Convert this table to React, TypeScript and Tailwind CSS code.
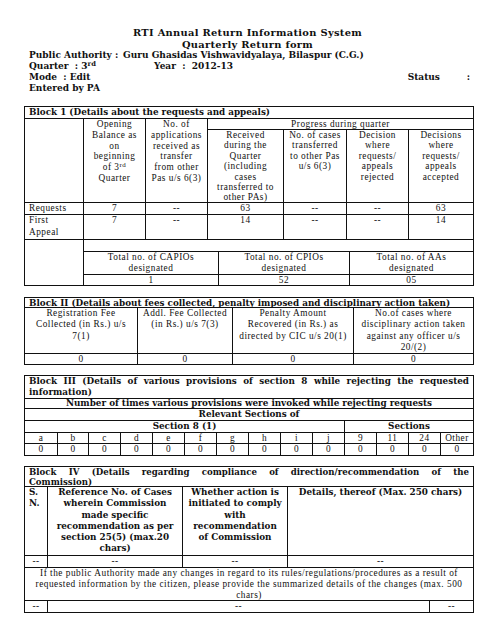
import React from "react";

const B = "border-r border-b border-[#111]";
const R = "font-['Liberation_Serif','Times_New_Roman',serif] font-normal text-[9.3px] tracking-[0.5px]";
const BD = "font-['DejaVu_Serif',serif] font-bold text-[8.8px]";

function Lines({ items }: { items: React.ReactNode[] }) {
  return (
    <>
      {items.map((t, i) => (
        <div key={i} className="whitespace-nowrap">
          {t}
        </div>
      ))}
    </>
  );
}

export default function App() {
  const letters = ["a", "b", "c", "d", "e", "f", "g", "h", "i", "j", "9", "11", "24", "Other"];
  return (
    <div className="w-[495px] h-[640px] overflow-hidden bg-white text-[#111] font-['Liberation_Serif','Times_New_Roman',serif]">
      {/* Title */}
      <div className="pt-[27px] text-center font-['DejaVu_Serif',serif] font-bold text-[9.9px] tracking-[0.3px] leading-[11.5px]">
        <div>RTI Annual Return Information System</div>
        <div>Quarterly Return form</div>
      </div>

      {/* Meta */}
      <div className="pl-[29px] pr-[25px] font-['DejaVu_Serif',serif] font-bold text-[9px] leading-[11px]">
        <div className="flex whitespace-nowrap">
          <span className="w-[94px]">Public Authority :</span>
          <span>Guru Ghasidas Vishwavidyalaya, Bilaspur (C.G.)</span>
        </div>
        <div className="flex whitespace-nowrap">
          <span className="w-[125px]">
            Quarter&nbsp; : 3<sup>rd</sup>
          </span>
          <span>Year&nbsp; :&nbsp; 2012-13</span>
        </div>
        <div className="flex justify-between whitespace-nowrap">
          <span>Mode&nbsp; : Edit</span>
          <span className="flex">
            <span className="w-[59px]">Status</span>
            <span>:</span>
          </span>
        </div>
        <div>Entered by PA</div>
      </div>

      {/* Block 1 */}
      <div className="ml-[24px] mt-[12px] w-[450px]">
        <div className="grid grid-cols-[59px_62px_62px_76px_63px_62px_65px] grid-rows-[12px_11px_73px_12px_25px] border-l border-t border-[#111]">
          <div className={`col-span-7 ${B} ${BD} pl-[4px] leading-[11px] whitespace-nowrap`}>
            Block 1 (Details about the requests and appeals)
          </div>
          <div className={`row-span-2 ${B}`}></div>
          <div className={`row-span-2 ${B} ${R} text-center leading-[10.8px]`}>
            <Lines items={["Opening", "Balance as", "on", "beginning", <>of 3<sup>rd</sup></>, "Quarter"]} />
          </div>
          <div className={`row-span-2 ${B} ${R} text-center leading-[10.8px]`}>
            <Lines items={["No. of", "applications", "received as", "transfer", "from other", "Pas u/s 6(3)"]} />
          </div>
          <div className={`col-span-4 ${B} ${R} text-center leading-[10.5px] whitespace-nowrap`}>
            Progress during quarter
          </div>
          <div className={`${B} ${R} text-center leading-[10.4px]`}>
            <Lines items={["Received", "during the", "Quarter", "(including", "cases", "transferred to", "other PAs)"]} />
          </div>
          <div className={`${B} ${R} text-center leading-[10.4px]`}>
            <Lines items={["No. of cases", "transferred", "to other Pas", "u/s 6(3)"]} />
          </div>
          <div className={`${B} ${R} text-center leading-[10.4px]`}>
            <Lines items={["Decision", "where", "requests/", "appeals", "rejected"]} />
          </div>
          <div className={`${B} ${R} text-center leading-[10.4px]`}>
            <Lines items={["Decisions", "where", "requests/", "appeals", "accepted"]} />
          </div>

          <div className={`${B} ${R} pl-[4px] leading-[11px]`}>Requests</div>
          <div className={`${B} ${R} text-center leading-[11px]`}>7</div>
          <div className={`${B} ${R} text-center leading-[11px]`}>--</div>
          <div className={`${B} ${R} text-center leading-[11px]`}>63</div>
          <div className={`${B} ${R} text-center leading-[11px]`}>--</div>
          <div className={`${B} ${R} text-center leading-[11px]`}>--</div>
          <div className={`${B} ${R} text-center leading-[11px]`}>63</div>

          <div className={`${B} ${R} pl-[4px] leading-[11.5px]`}>
            <div>First</div>
            <div>Appeal</div>
          </div>
          <div className={`${B} ${R} text-center leading-[11.5px]`}>7</div>
          <div className={`${B} ${R} text-center leading-[11.5px]`}>--</div>
          <div className={`${B} ${R} text-center leading-[11.5px]`}>14</div>
          <div className={`${B} ${R} text-center leading-[11.5px]`}>--</div>
          <div className={`${B} ${R} text-center leading-[11.5px]`}>--</div>
          <div className={`${B} ${R} text-center leading-[11.5px]`}>14</div>
        </div>
        <div className="grid grid-cols-[59px_135px_131px_124px] grid-rows-[12px_23px_11px] border-l border-[#111]">
          <div className={`row-span-3 ${B}`}></div>
          <div className={`col-span-3 ${B}`}></div>
          <div className={`${B} ${R} text-center leading-[11px] flex flex-col justify-center`}>
            <div>Total no. of CAPIOs</div>
            <div>designated</div>
          </div>
          <div className={`${B} ${R} text-center leading-[11px] flex flex-col justify-center`}>
            <div>Total no. of CPIOs</div>
            <div>designated</div>
          </div>
          <div className={`${B} ${R} text-center leading-[11px] flex flex-col justify-center`}>
            <div>Total no. of AAs</div>
            <div>designated</div>
          </div>
          <div className={`${B} ${R} text-center leading-[10px]`}>1</div>
          <div className={`${B} ${R} text-center leading-[10px]`}>52</div>
          <div className={`${B} ${R} text-center leading-[10px]`}>05</div>
        </div>
      </div>

      {/* Block II */}
      <div className="ml-[24px] mt-[11px] w-[450px] grid grid-cols-[113px_95px_121px_120px] grid-rows-[10px_46px_11px] border-l border-t border-[#111]">
        <div className={`col-span-4 ${B} ${BD} pl-[4px] leading-[10px] whitespace-nowrap`}>
          Block II (Details about fees collected, penalty imposed and disciplinary action taken)
        </div>
        <div className={`${B} ${R} text-center leading-[11.3px]`}>
          <Lines items={["Registration Fee", "Collected (in Rs.) u/s", "7(1)"]} />
        </div>
        <div className={`${B} ${R} text-center leading-[11.3px]`}>
          <Lines items={["Addl. Fee Collected", "(in Rs.) u/s 7(3)"]} />
        </div>
        <div className={`${B} ${R} text-center leading-[11.3px]`}>
          <Lines items={["Penalty Amount", "Recovered (in Rs.) as", "directed by CIC u/s 20(1)"]} />
        </div>
        <div className={`${B} ${R} text-center leading-[11.3px]`}>
          <Lines items={["No.of cases where", "disciplinary action taken", "against any officer u/s", "20/(2)"]} />
        </div>
        <div className={`${B} ${R} text-center leading-[10px]`}>0</div>
        <div className={`${B} ${R} text-center leading-[10px]`}>0</div>
        <div className={`${B} ${R} text-center leading-[10px]`}>0</div>
        <div className={`${B} ${R} text-center leading-[10px]`}>0</div>
      </div>

      {/* Block III */}
      <div className="ml-[24px] mt-[10px] w-[450px] grid grid-cols-[33px_31px_32px_32px_32px_32px_32px_32px_32px_32px_32px_32px_32px_33px] grid-rows-[23px_10px_12px_12px_11px_12px] border-l border-t border-[#111]">
        <div className={`col-span-14 ${B} ${BD} px-[4px] leading-[11px]`}>
          <div className="whitespace-nowrap text-justify [text-align-last:justify]">
            Block III (Details of various provisions of section 8 while rejecting the requested
          </div>
          <div>information)</div>
        </div>
        <div className={`col-span-14 ${B} ${BD} text-center leading-[9px] whitespace-nowrap`}>
          Number of times various provisions were invoked while rejecting requests
        </div>
        <div className={`col-span-14 ${B} ${BD} text-center leading-[11px]`}>Relevant Sections of</div>
        <div className={`col-span-10 ${B} ${BD} text-center leading-[11px]`}>Section 8 (1)</div>
        <div className={`col-span-4 ${B} ${BD} text-center leading-[11px]`}>Sections</div>
        {letters.map((l) => (
          <div key={"l" + l} className={`${B} ${R} text-center leading-[10px]`}>
            {l}
          </div>
        ))}
        {letters.map((l) => (
          <div key={"z" + l} className={`${B} ${R} text-center leading-[11px]`}>
            0
          </div>
        ))}
      </div>

      {/* Block IV */}
      <div className="ml-[24px] mt-[10px] w-[450px] grid grid-cols-[23px_135px_105px_142px_44px] grid-rows-[20px_69px_12px_33px_12px] border-l border-t border-[#111]">
        <div className={`col-span-5 ${B} font-['DejaVu_Serif',serif] font-bold text-[8.6px] px-[4px] leading-[10px]`}>
          <div className="whitespace-nowrap text-justify [text-align-last:justify]">
            Block IV (Details regarding compliance of direction/recommendation of the
          </div>
          <div>Commission)</div>
        </div>
        <div className={`${B} ${BD} pl-[4px] leading-[11.3px]`}>
          <div>S.</div>
          <div>N.</div>
        </div>
        <div className={`${B} ${BD} text-center leading-[11.3px]`}>
          <Lines
            items={[
              "Reference No. of Cases",
              "wherein Commission",
              "made specific",
              "recommendation as per",
              "section 25(5) (max.20",
              "chars)",
            ]}
          />
        </div>
        <div className={`${B} ${BD} text-center leading-[11.3px]`}>
          <Lines items={["Whether action is", "initiated to comply", "with", "recommendation", "of Commission"]} />
        </div>
        <div className={`col-span-2 ${B} ${BD} text-center leading-[11.3px] whitespace-nowrap`}>
          Details, thereof (Max. 250 chars)
        </div>
        <div className={`${B} ${R} text-center leading-[11px]`}>--</div>
        <div className={`${B} ${R} text-center leading-[11px]`}>--</div>
        <div className={`${B} ${R} text-center leading-[11px]`}>--</div>
        <div className={`col-span-2 ${B} ${R} text-center leading-[11px]`}>--</div>
        <div className={`col-span-5 ${B} ${R} text-center leading-[10.8px]`}>
          <Lines
            items={[
              "If the public Authority made any changes in regard to its rules/regulations/procedures as a result of",
              "requested information by the citizen, please provide the summarized details of the changes (max. 500",
              "chars)",
            ]}
          />
        </div>
        <div className={`${B} ${R} text-center leading-[11px]`}>--</div>
        <div className={`col-span-3 ${B} ${R} text-center leading-[11px]`}>--</div>
        <div className={`${B} ${R} text-center leading-[11px]`}>--</div>
      </div>
    </div>
  );
}
